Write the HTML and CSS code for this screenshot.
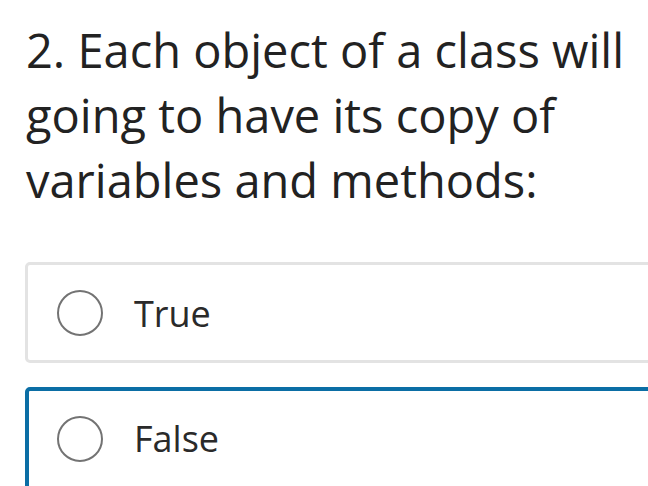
FILE: index.html
```html
<!DOCTYPE html>
<html>
<head>
<meta charset="utf-8">
<link rel="stylesheet" href="styles.css">
</head>
<body>
<div class="page">
  <h1 class="question">2. Each object of a class will going to have its copy of variables and methods:</h1>
  <div class="options">
    <label class="option">
      <span class="radio"></span>
      <span class="label">True</span>
    </label>
    <label class="option focused">
      <span class="radio"></span>
      <span class="label">False</span>
    </label>
  </div>
</div>
</body>
</html>
```

FILE: styles.css
```css
html, body {
  margin: 0;
  padding: 0;
  background: #ffffff;
  overflow: hidden;
}
.page {
  width: 623px;
  padding: 18px 0 0 25px;
  font-family: "Open Sans", "Noto Sans", sans-serif;
  color: #222222;
}
.question {
  margin: 0;
  width: 612px;
  font-size: 47px;
  font-weight: 400;
  line-height: 65px;
  padding-left: 1px;
}
.options {
  margin-top: 49px;
  width: 700px;
  display: flex;
  flex-direction: column;
  gap: 24px;
}
.option {
  display: flex;
  align-items: center;
  gap: 31px;
  height: 95px;
  padding-left: 29px;
  border: 3px solid #e3e3e3;
  border-radius: 5px;
  box-sizing: content-box;
}
.option.focused {
  border: 4px solid #0b6ea5;
  padding-left: 28px;
  height: 97px;
  align-items: flex-start;
  padding-top: 0;
}
.option.focused .radio {
  margin-top: 25px;
}
.option.focused .label {
  margin-top: 29px;
}
.radio {
  width: 42px;
  height: 42px;
  border: 2px solid #737373;
  border-radius: 50%;
  flex: none;
}
.label {
  font-size: 36px;
  line-height: 1;
  color: #2a2a2a;
  position: relative;
  top: 1px;
}
```
